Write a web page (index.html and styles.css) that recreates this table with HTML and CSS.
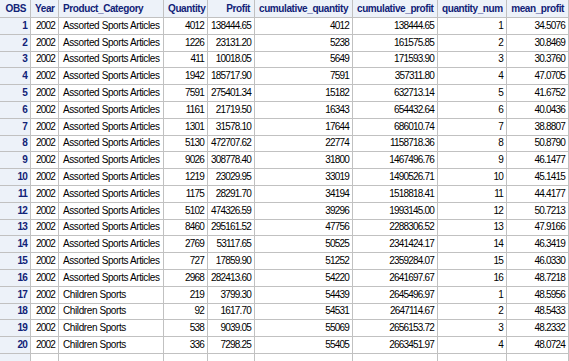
FILE: index.html
```html
<!DOCTYPE html>
<html lang="en">
<head>
  <meta charset="UTF-8" />
  <title>Cumulative profit</title>
  <link rel="stylesheet" href="styles.css">
</head>
<body>

  <table class="report">
    <colgroup>
      <col class="c-obs"><col class="c-year"><col class="c-cat"><col class="c-qty"><col class="c-profit">
      <col class="c-cq"><col class="c-cp"><col class="c-qn"><col class="c-mp">
    </colgroup>
    <thead>
      <tr>
        <th class="r">OBS</th>
        <th class="r">Year</th>
        <th>Product_Category</th>
        <th class="r">Quantity</th>
        <th class="r">Profit</th>
        <th class="r">cumulative_quantity</th>
        <th class="r">cumulative_profit</th>
        <th class="r">quantity_num</th>
        <th class="r">mean_profit</th>
      </tr>
    </thead>
    <tbody>
      <tr><th class="num">1</th><td class="num">2002</td><td>Assorted Sports Articles</td><td class="num">4012</td><td class="num">138444.65</td><td class="num">4012</td><td class="num">138444.65</td><td class="num">1</td><td class="num">34.5076</td></tr>
      <tr><th class="num">2</th><td class="num">2002</td><td>Assorted Sports Articles</td><td class="num">1226</td><td class="num">23131.20</td><td class="num">5238</td><td class="num">161575.85</td><td class="num">2</td><td class="num">30.8469</td></tr>
      <tr><th class="num">3</th><td class="num">2002</td><td>Assorted Sports Articles</td><td class="num">411</td><td class="num">10018.05</td><td class="num">5649</td><td class="num">171593.90</td><td class="num">3</td><td class="num">30.3760</td></tr>
      <tr><th class="num">4</th><td class="num">2002</td><td>Assorted Sports Articles</td><td class="num">1942</td><td class="num">185717.90</td><td class="num">7591</td><td class="num">357311.80</td><td class="num">4</td><td class="num">47.0705</td></tr>
      <tr><th class="num">5</th><td class="num">2002</td><td>Assorted Sports Articles</td><td class="num">7591</td><td class="num">275401.34</td><td class="num">15182</td><td class="num">632713.14</td><td class="num">5</td><td class="num">41.6752</td></tr>
      <tr><th class="num">6</th><td class="num">2002</td><td>Assorted Sports Articles</td><td class="num">1161</td><td class="num">21719.50</td><td class="num">16343</td><td class="num">654432.64</td><td class="num">6</td><td class="num">40.0436</td></tr>
      <tr><th class="num">7</th><td class="num">2002</td><td>Assorted Sports Articles</td><td class="num">1301</td><td class="num">31578.10</td><td class="num">17644</td><td class="num">686010.74</td><td class="num">7</td><td class="num">38.8807</td></tr>
      <tr><th class="num">8</th><td class="num">2002</td><td>Assorted Sports Articles</td><td class="num">5130</td><td class="num">472707.62</td><td class="num">22774</td><td class="num">1158718.36</td><td class="num">8</td><td class="num">50.8790</td></tr>
      <tr><th class="num">9</th><td class="num">2002</td><td>Assorted Sports Articles</td><td class="num">9026</td><td class="num">308778.40</td><td class="num">31800</td><td class="num">1467496.76</td><td class="num">9</td><td class="num">46.1477</td></tr>
      <tr><th class="num">10</th><td class="num">2002</td><td>Assorted Sports Articles</td><td class="num">1219</td><td class="num">23029.95</td><td class="num">33019</td><td class="num">1490526.71</td><td class="num">10</td><td class="num">45.1415</td></tr>
      <tr><th class="num">11</th><td class="num">2002</td><td>Assorted Sports Articles</td><td class="num">1175</td><td class="num">28291.70</td><td class="num">34194</td><td class="num">1518818.41</td><td class="num">11</td><td class="num">44.4177</td></tr>
      <tr><th class="num">12</th><td class="num">2002</td><td>Assorted Sports Articles</td><td class="num">5102</td><td class="num">474326.59</td><td class="num">39296</td><td class="num">1993145.00</td><td class="num">12</td><td class="num">50.7213</td></tr>
      <tr><th class="num">13</th><td class="num">2002</td><td>Assorted Sports Articles</td><td class="num">8460</td><td class="num">295161.52</td><td class="num">47756</td><td class="num">2288306.52</td><td class="num">13</td><td class="num">47.9166</td></tr>
      <tr><th class="num">14</th><td class="num">2002</td><td>Assorted Sports Articles</td><td class="num">2769</td><td class="num">53117.65</td><td class="num">50525</td><td class="num">2341424.17</td><td class="num">14</td><td class="num">46.3419</td></tr>
      <tr><th class="num">15</th><td class="num">2002</td><td>Assorted Sports Articles</td><td class="num">727</td><td class="num">17859.90</td><td class="num">51252</td><td class="num">2359284.07</td><td class="num">15</td><td class="num">46.0330</td></tr>
      <tr><th class="num">16</th><td class="num">2002</td><td>Assorted Sports Articles</td><td class="num">2968</td><td class="num">282413.60</td><td class="num">54220</td><td class="num">2641697.67</td><td class="num">16</td><td class="num">48.7218</td></tr>
      <tr><th class="num">17</th><td class="num">2002</td><td>Children Sports</td><td class="num">219</td><td class="num">3799.30</td><td class="num">54439</td><td class="num">2645496.97</td><td class="num">1</td><td class="num">48.5956</td></tr>
      <tr><th class="num">18</th><td class="num">2002</td><td>Children Sports</td><td class="num">92</td><td class="num">1617.70</td><td class="num">54531</td><td class="num">2647114.67</td><td class="num">2</td><td class="num">48.5433</td></tr>
      <tr><th class="num">19</th><td class="num">2002</td><td>Children Sports</td><td class="num">538</td><td class="num">9039.05</td><td class="num">55069</td><td class="num">2656153.72</td><td class="num">3</td><td class="num">48.2332</td></tr>
      <tr><th class="num">20</th><td class="num">2002</td><td>Children Sports</td><td class="num">336</td><td class="num">7298.25</td><td class="num">55405</td><td class="num">2663451.97</td><td class="num">4</td><td class="num">48.0724</td></tr>
      <tr><th class="num"></th><td></td><td></td><td></td><td></td><td></td><td></td><td></td><td></td></tr>
    </tbody>
  </table>

</body>
</html>
```

FILE: styles.css
```css
body {
  margin: 0;
  background-color: #fff;
  font-family: 'Liberation Sans', Arial, sans-serif;
  font-size: 10px;
  color: #000;
  overflow: hidden;
}

.report {
  border-collapse: collapse;
  table-layout: fixed;
  width: 569px;
  margin: -1px 0 0 -1px;
}

.c-obs { width: 31px; }
.c-year { width: 28px; }
.c-cat { width: 105px; }
.c-qty { width: 44px; }
.c-profit { width: 47px; }
.c-cq { width: 98px; }
.c-cp { width: 85px; }
.c-qn { width: 69px; }
.c-mp { width: 62px; }

.report th,
.report td {
  border: 1px solid #c1c1c1;
  padding: 0 4px;
  white-space: nowrap;
  overflow: hidden;
  text-align: left;
  vertical-align: middle;
  letter-spacing: -0.4px;
  line-height: 12px;
}

.report th {
  background-color: #edf2f9;
  color: #112277;
  font-weight: bold;
}

.report thead tr {
  height: 18px;
}

.report tbody tr {
  height: 16.8px;
}

.report .r,
.report .num {
  text-align: right;
}

.report .num {
  padding: 0 3px 0 2px;
  letter-spacing: -0.8px;
}
```
